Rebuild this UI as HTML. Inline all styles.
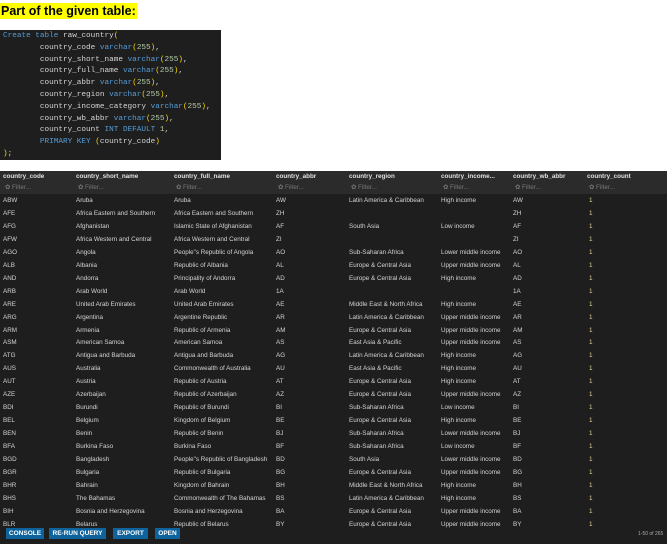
<!DOCTYPE html>
<html><head><meta charset="utf-8"><style>
body{margin:0;background:#fff;width:667px;height:544px;overflow:hidden;position:relative;font-family:"Liberation Sans",sans-serif}
.title{position:absolute;left:0;top:3px;background:#ffff00;font-weight:bold;font-size:12.5px;line-height:16px;padding:0 1px;color:#000}
.code{position:absolute;left:0;top:30px;width:221px;height:130px;background:#1e1e1e;font-family:"Liberation Mono",monospace;font-size:7.7px;line-height:11.8px;color:#d4d4d4;padding:1px 0 0 3px;box-sizing:border-box;white-space:pre}
.k{color:#569cd6}.n{color:#b5cea8}.p{color:#ffd700}
.tbl{position:absolute;left:0;top:171px;width:667px;height:373px;background:#1e1e1e;font-size:6.3px;color:#d4d4d4}
.hd{position:absolute;left:0;top:0;width:667px;height:10px;background:#2b2b2b;font-weight:bold;color:#e0e0e0}
.fl{position:absolute;left:0;top:10px;width:667px;height:13px;background:#2b2b2b;color:#777}
.c{position:absolute;white-space:nowrap}
.row{position:absolute;left:0;width:667px;height:13px}
.cnt{color:#e8d49a}
.btn{position:absolute;top:357px;height:11px;background:#0e639c;color:#fff;font-weight:bold;font-size:6.5px;line-height:11px;text-align:center}
</style></head><body>
<div class="title">Part of the given table:</div>
<div class="code"><span class="k">Create table</span> raw_country<span class="p">(</span>
        country_code <span class="k">varchar</span><span class="p">(</span><span class="n">255</span><span class="p">)</span>,
        country_short_name <span class="k">varchar</span><span class="p">(</span><span class="n">255</span><span class="p">)</span>,
        country_full_name <span class="k">varchar</span><span class="p">(</span><span class="n">255</span><span class="p">)</span>,
        country_abbr <span class="k">varchar</span><span class="p">(</span><span class="n">255</span><span class="p">)</span>,
        country_region <span class="k">varchar</span><span class="p">(</span><span class="n">255</span><span class="p">)</span>,
        country_income_category <span class="k">varchar</span><span class="p">(</span><span class="n">255</span><span class="p">)</span>,
        country_wb_abbr <span class="k">varchar</span><span class="p">(</span><span class="n">255</span><span class="p">)</span>,
        country_count <span class="k">INT DEFAULT</span> <span class="n">1</span>,
        <span class="k">PRIMARY KEY</span> <span class="p">(</span>country_code<span class="p">)</span>
<span class="p">)</span>;</div>
<div class="tbl" id="t">
<div class="hd" id="hd"></div><div class="fl" id="fl"></div>
<div class="btn" style="left:6px;width:38px">CONSOLE</div>
<div class="btn" style="left:49px;width:57px">RE-RUN QUERY</div>
<div class="btn" style="left:113px;width:35px">EXPORT</div>
<div class="btn" style="left:155px;width:25px">OPEN</div>
<div class="c" style="left:638px;top:360px;font-size:5px;color:#aaa">1-50 of 265</div>
</div>
<script>
var X=[3,76,174,276,349,441,513,587];
var H=["country_code","country_short_name","country_full_name","country_abbr","country_region","country_income...","country_wb_abbr","country_count"];
var hd=document.getElementById('hd'),fl=document.getElementById('fl'),t=document.getElementById('t');
H.forEach(function(h,i){hd.innerHTML+='<div class="c" style="left:'+X[i]+'px;top:2px">'+h+'</div>';fl.innerHTML+='<div class="c" style="left:'+(X[i]+2)+'px;top:3px">✿ Filter...</div>';});
var R=[
["ABW","Aruba","Aruba","AW","Latin America & Caribbean","High income","AW"],
["AFE","Africa Eastern and Southern","Africa Eastern and Southern","ZH","","","ZH"],
["AFG","Afghanistan","Islamic State of Afghanistan","AF","South Asia","Low income","AF"],
["AFW","Africa Western and Central","Africa Western and Central","ZI","","","ZI"],
["AGO","Angola","People\"s Republic of Angola","AO","Sub-Saharan Africa","Lower middle income","AO"],
["ALB","Albania","Republic of Albania","AL","Europe & Central Asia","Upper middle income","AL"],
["AND","Andorra","Principality of Andorra","AD","Europe & Central Asia","High income","AD"],
["ARB","Arab World","Arab World","1A","","","1A"],
["ARE","United Arab Emirates","United Arab Emirates","AE","Middle East & North Africa","High income","AE"],
["ARG","Argentina","Argentine Republic","AR","Latin America & Caribbean","Upper middle income","AR"],
["ARM","Armenia","Republic of Armenia","AM","Europe & Central Asia","Upper middle income","AM"],
["ASM","American Samoa","American Samoa","AS","East Asia & Pacific","Upper middle income","AS"],
["ATG","Antigua and Barbuda","Antigua and Barbuda","AG","Latin America & Caribbean","High income","AG"],
["AUS","Australia","Commonwealth of Australia","AU","East Asia & Pacific","High income","AU"],
["AUT","Austria","Republic of Austria","AT","Europe & Central Asia","High income","AT"],
["AZE","Azerbaijan","Republic of Azerbaijan","AZ","Europe & Central Asia","Upper middle income","AZ"],
["BDI","Burundi","Republic of Burundi","BI","Sub-Saharan Africa","Low income","BI"],
["BEL","Belgium","Kingdom of Belgium","BE","Europe & Central Asia","High income","BE"],
["BEN","Benin","Republic of Benin","BJ","Sub-Saharan Africa","Lower middle income","BJ"],
["BFA","Burkina Faso","Burkina Faso","BF","Sub-Saharan Africa","Low income","BF"],
["BGD","Bangladesh","People\"s Republic of Bangladesh","BD","South Asia","Lower middle income","BD"],
["BGR","Bulgaria","Republic of Bulgaria","BG","Europe & Central Asia","Upper middle income","BG"],
["BHR","Bahrain","Kingdom of Bahrain","BH","Middle East & North Africa","High income","BH"],
["BHS","The Bahamas","Commonwealth of The Bahamas","BS","Latin America & Caribbean","High income","BS"],
["BIH","Bosnia and Herzegovina","Bosnia and Herzegovina","BA","Europe & Central Asia","Upper middle income","BA"],
["BLR","Belarus","Republic of Belarus","BY","Europe & Central Asia","Upper middle income","BY"]];
var s='';
R.forEach(function(r,j){var top=26+j*12.95;s+='<div class="row" style="top:'+top+'px">';r.forEach(function(v,i){s+='<div class="c" style="left:'+X[i]+'px;top:0">'+v.replace(/&/g,'&amp;')+'</div>';});s+='<div class="c cnt" style="left:589px;top:0">1</div></div>';});
t.insertAdjacentHTML('beforeend',s);
</script>
</body></html>
